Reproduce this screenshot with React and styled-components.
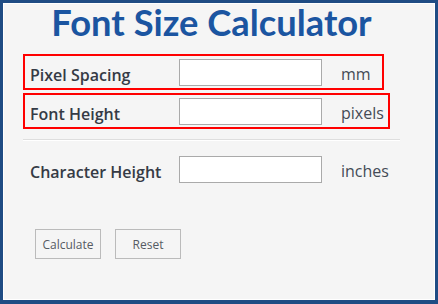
import React from "react";
import styled, { createGlobalStyle } from "styled-components";

const GlobalStyle = createGlobalStyle`
  html, body {
    margin: 0;
    padding: 0;
    background: #1f4c84;
  }
  body {
    font-family: "Open Sans", "Liberation Sans", sans-serif;
  }
`;

const Frame = styled.div`
  width: 438px;
  height: 304px;
  box-sizing: border-box;
  padding: 3px 3px 4px 3px;
`;

const Panel = styled.div`
  height: 100%;
  box-sizing: border-box;
  background: #f5f5f5;
  border: 1px solid #ffffff;
  padding: 0 34px 0 19px;
`;

const Content = styled.div`
  width: 377px;
  display: flex;
  flex-direction: column;
`;

const Title = styled.h1`
  margin: 0;
  font-family: Lato, "Open Sans", sans-serif;
  font-weight: 700;
  font-size: 36.3px;
  line-height: 36px;
  color: #1b55a1;
  text-align: center;
  height: 36px;
`;

const Row = styled.div`
  display: flex;
  align-items: center;
  box-sizing: border-box;
  height: 36px;
  width: ${(p) => p.$width}px;
  border: 2px solid ${(p) => (p.$marked ? "#ff0000" : "transparent")};
  padding-left: 5px;
  margin-top: ${(p) => p.$top}px;
`;

const Label = styled.label`
  width: 149px;
  flex: none;
  padding-top: 5px;
  font-size: 16px;
  font-weight: 600;
  color: #353b45;
`;

const Input = styled.input`
  box-sizing: border-box;
  width: 143px;
  height: 27px;
  border: 1px solid #aaaaaa;
  background: #ffffff;
  padding: 0 4px;
  margin: 0;
  outline: none;
`;

const Unit = styled.span`
  margin-left: 19px;
  padding-top: 4px;
  font-size: 16px;
  color: #444b55;
`;

const Divider = styled.hr`
  margin: 10px 0 0 0;
  border: none;
  height: 1px;
  background: #dedede;
  box-shadow: 0 1px 0 #ffffff;
`;

const Buttons = styled.div`
  display: flex;
  gap: 14px;
  margin: 42px 0 0 12px;
`;

const Button = styled.button`
  width: 66px;
  height: 30px;
  box-sizing: border-box;
  border: 1px solid #bbbbbb;
  background: #f5f5f5;
  font-family: "Open Sans", "Liberation Sans", sans-serif;
  font-size: 12px;
  color: #555b63;
  padding: 0;
  cursor: pointer;
`;

const rows = [
  { label: "Pixel Spacing", unit: "mm", marked: true, width: 361, top: 14 },
  { label: "Font Height", unit: "pixels", marked: true, width: 367, top: 3 },
];

export default function App() {
  return (
    <Frame>
      <GlobalStyle />
      <Panel>
        <Content>
          <Title>Font Size Calculator</Title>
          {rows.map((r) => (
            <Row key={r.label} $marked={r.marked} $width={r.width} $top={r.top}>
              <Label>{r.label}</Label>
              <Input type="text" />
              <Unit>{r.unit}</Unit>
            </Row>
          ))}
          <Divider />
          <Row $width={377} $top={11}>
            <Label>Character Height</Label>
            <Input type="text" />
            <Unit>inches</Unit>
          </Row>
          <Buttons>
            <Button>Calculate</Button>
            <Button>Reset</Button>
          </Buttons>
        </Content>
      </Panel>
    </Frame>
  );
}
